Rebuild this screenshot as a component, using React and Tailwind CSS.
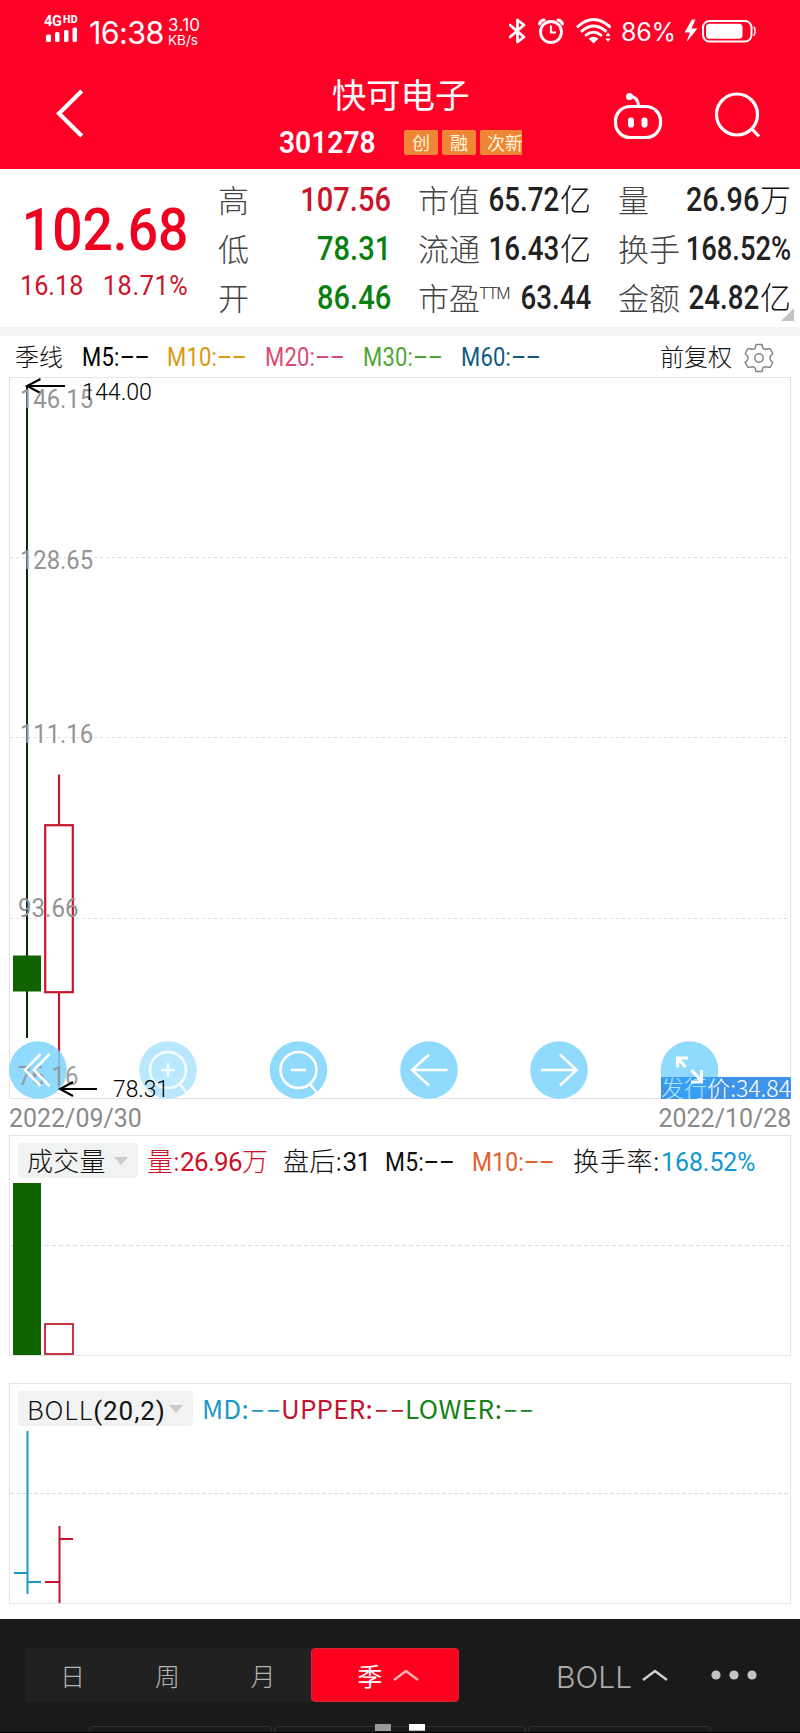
import React from "react";

const CJK = "font-['Noto_Sans_CJK_SC',sans-serif]";
const NUM = "font-['Roboto',sans-serif]";

function StatusBar() {
  return (
    <div className="flex h-[62px] items-start pl-[44px] text-white">
      <div className="mt-[15px] w-[45px]">
        <div className="flex h-[12px] items-start font-['Roboto',sans-serif] font-bold leading-[13px]">
          <span className="w-[19px] text-[14.500px] tracking-[-0.3px]">4G</span>
          <span className="text-[10.500px] font-extrabold leading-[10px] tracking-[0.4px]">HD</span>
        </div>
        <svg className="block" width="36" height="15" viewBox="0 0 36 15" fill="#fff">
          <rect x="2" y="7.500" width="5" height="7.500" rx="1.5" />
          <rect x="11" y="5" width="4.500" height="10" rx="1.5" />
          <rect x="20" y="3" width="4.500" height="12" rx="1.5" />
          <rect x="28.500" y="0.500" width="4.500" height="14.500" rx="1.5" />
        </svg>
      </div>
      <div className="mt-[15px] w-[79px] whitespace-nowrap font-['Inter',sans-serif] text-[30.500px] leading-[36px] tracking-[-0.6px]">16:38</div>
      <div className="w-[341px] pt-[18px] font-['Inter',sans-serif]">
        <div className="text-[17px] leading-[14px] tracking-[0.3px]">3.10</div>
        <div className="text-[13.500px] leading-[16px]">KB/s</div>
      </div>
      <svg className="mt-[17px] block" width="104" height="28" viewBox="0 0 104 28" fill="none" stroke="#fff">
        <path d="M1 8 L15 20 L8.500 25 V3 L15 8 L1 20" strokeWidth="2.800" strokeLinejoin="round" strokeLinecap="round" />
        <circle cx="42" cy="15" r="10.500" strokeWidth="2.800" />
        <path d="M42 8.500 V15.500 H47" strokeWidth="2.200" />
        <path d="M30.500 7 Q31.500 3.500 35 3 M53.500 7 Q52.500 3.500 49 3" strokeWidth="3" strokeLinecap="round" />
        <path d="M69 9.500 Q84.500 -4.500 100.500 9.500" strokeWidth="3" strokeLinecap="round" />
        <path d="M73 14 Q84.500 4 96.500 14" strokeWidth="3" strokeLinecap="round" />
        <path d="M77 18.200 Q84.500 12 92 18.200" strokeWidth="2.800" strokeLinecap="round" />
        <path d="M79.500 21.500 Q84.500 18 89.500 21.500 L84.500 26.500 Z" fill="#fff" stroke="none" />
        <path d="M96.500 19 L99 15.500 L101.500 19 Z M96.500 21.500 L99 25 L101.500 21.500 Z" fill="#fff" stroke="none" />
      </svg>
      <div className="ml-[8px] mt-[16px] w-[62px] whitespace-nowrap font-['Inter',sans-serif] text-[25px] leading-[32px] tracking-[-0.2px]">86%</div>
      <svg className="mt-[18px] block" width="75" height="26" viewBox="683 18 75 26" fill="none">
        <path d="M692 19.500 L684.500 32.500 H690 L686.500 42 L697.500 28.500 H691.500 L695.500 19.500 Z" fill="#fff" />
        <rect x="703" y="21" width="48.500" height="20.500" rx="6.500" stroke="#fff" strokeWidth="2" />
        <rect x="706" y="23.800" width="36.500" height="15" rx="3.500" fill="#fff" />
        <path d="M753.500 27 Q755 27.500 755 31 Q755 35 753.500 35.500" stroke="#fff" strokeWidth="1.500" />
      </svg>
    </div>
  );
}

function Tag({ children, className }) {
  return <div className={`h-[25px] overflow-hidden whitespace-nowrap bg-[#ef8636] text-center text-[18px] leading-[24px] text-[#fff6dc] ${className}`}>{children}</div>;
}

function TitleBar() {
  return (
    <div className="flex h-[107px] pl-[56px] text-white">
      <svg className="mt-[24px] block w-[223px]" width="223" height="56" viewBox="56 86 223 56" fill="none" stroke="#fff">
        <path d="M81.800 91 L59 113.500 L81.800 136" strokeWidth="4.200" />
      </svg>
      <div className="w-[243px]">
        <div className={`mt-[6px] text-center text-[34.500px] leading-[50px] tracking-[-0.1px] ${CJK}`}>快可电子</div>
        <div className="mt-[12px] flex">
          <div className={`mt-[-3px] w-[126px] origin-left scale-x-[0.910] whitespace-nowrap text-[31px] font-semibold leading-[32px] ${NUM}`}>301278</div>
          <div className={`flex gap-[4px] ${CJK}`}>
            <Tag className="w-[34px] rounded-[2px]">创</Tag>
            <Tag className="w-[34px] rounded-[2px]">融</Tag>
            <Tag className="w-[42px] rounded-l-[2px] pl-[7px] text-left">次新</Tag>
          </div>
        </div>
      </div>
      <svg className="mt-[26px] block" width="250" height="60" viewBox="522 88 250 60" fill="none" stroke="#fff" strokeWidth="3.200">
        <rect x="615.500" y="106.500" width="45" height="31" rx="14.500" />
        <path d="M638.500 106 Q638 97 630 96" />
        <circle cx="629.500" cy="96.500" r="2.500" fill="#fff" strokeWidth="2" />
        <rect x="628" y="117.500" width="6" height="10" rx="2.800" fill="#fff" stroke="none" />
        <rect x="641.500" y="117.500" width="6" height="10" rx="2.800" fill="#fff" stroke="none" />
        <circle cx="737" cy="114.500" r="20.500" />
        <path d="M751.500 128.500 L759 136.500" />
      </svg>
    </div>
  );
}

function Stat({ label, sup, value, unit, color = "text-[#222]", scale = "scale-x-[0.840]" }) {
  return (
    <div className="flex h-[49px] items-center justify-between whitespace-nowrap">
      <div className={`relative text-[31px] font-light leading-[48px] text-[#444] ${CJK}`}>
        {label}
        {sup && <span className="absolute left-[61px] top-[8px] font-['Inter',sans-serif] text-[16px] font-light leading-[24px] tracking-[-1.500px]">{sup}</span>}
      </div>
      <div className="-ml-[40px] flex items-center pt-[3px]">
        <span className={`inline-block origin-right text-[33px] font-medium leading-[48px] ${scale} ${color} ${NUM}`}>{value}</span>
        {unit && <span className={`-mt-[5px] ml-px text-[31px] font-light leading-[48px] text-[#111] ${CJK}`}>{unit}</span>}
      </div>
    </div>
  );
}

function Quote() {
  return (
    <div className="relative flex h-[158px]">
      <div className={`w-[218px] pl-[20px] text-[#f00020] ${NUM}`}>
        <div className="mt-[25px] origin-left scale-x-[0.890] whitespace-nowrap pl-[2px] text-[60px] font-medium leading-[72px]">102.68</div>
        <div className="mt-[2px] flex origin-left scale-x-[0.900] whitespace-nowrap text-[28px] leading-[36px] text-[#d01228]">
          <span className="w-[92px]">16.18</span>
          <span className="tracking-[0.700px]">18.71%</span>
        </div>
      </div>
      <div className="w-[173px] pt-[5px]">
        <Stat label="高" value="107.56" color="text-[#c8152a]" scale="scale-x-[0.880]" />
        <Stat label="低" value="78.31" color="text-[#0a8010]" scale="scale-x-[0.880]" />
        <Stat label="开" value="86.46" color="text-[#0a8010]" scale="scale-x-[0.880]" />
      </div>
      <div className="ml-[27px] w-[173px] pt-[5px]">
        <Stat label="市值" value="65.72" unit="亿" />
        <Stat label="流通" value="16.43" unit="亿" />
        <Stat label="市盈" sup="TTM" value="63.44" />
      </div>
      <div className="ml-[27px] w-[173px] pt-[5px]">
        <Stat label="量" value="26.96" unit="万" scale="scale-x-[0.870]" />
        <Stat label="换手" value="168.52%" scale="scale-x-[0.830]" />
        <Stat label="金额" value="24.82" unit="亿" />
      </div>
      <svg className="absolute bottom-[6px] right-[6px]" width="13" height="13" viewBox="0 0 13 13"><path d="M13 0 V13 H0 Z" fill="#c4c4c4" /></svg>
    </div>
  );
}

function Gear() {
  return (
    <svg className="mt-[7px] block" width="30" height="30" viewBox="0 0 30 30" fill="none" stroke="#858585" strokeWidth="1.500">
      <path d="M12 1.500 H18 L18.800 5 Q20.500 7 23 6 L26 5.500 L28.800 10.500 L26.500 13 Q25.500 15 26.500 17 L28.800 19.500 L26 24.500 L23 24 Q20.500 23 18.800 25 L18 28.500 H12 L11.200 25 Q9.500 23 7 24 L4 24.500 L1.200 19.500 L3.500 17 Q4.500 15 3.500 13 L1.200 10.500 L4 5.500 L7 6 Q9.500 7 11.200 5 Z" strokeLinejoin="round" />
      <circle cx="15" cy="15" r="4.200" />
    </svg>
  );
}

function Average({ name, className }) {
  return (
    <span className={className}>
      <span className="inline-block origin-left scale-x-[0.880] tracking-[0.200px]">
        {name}:<span className="relative -top-px left-[1px] inline-block origin-left scale-x-[2.150] tracking-[0.900px]">--</span>
      </span>
    </span>
  );
}

function MaRow() {
  return (
    <div className={`flex h-[41px] whitespace-nowrap pl-[15px] text-[25px] leading-[43px] ${NUM}`}>
      <span className={`w-[67px] text-[24px] font-light leading-[40px] text-[#111] ${CJK}`}>季线</span>
      <Average name="M5" className="w-[85px] text-black" />
      <Average name="M10" className="w-[98px] text-[#d79a10]" />
      <Average name="M20" className="w-[98px] text-[#d94a70]" />
      <Average name="M30" className="w-[98px] text-[#4fa533]" />
      <Average name="M60" className="w-[199px] text-[#0f5a82]" />
      <span className={`w-[84px] text-[24px] font-light leading-[40px] text-[#111] ${CJK}`}>前复权</span>
      <Gear />
    </div>
  );
}

function Label({ x, y, w, size = 25, fill = "#949494", weight = 400, opacity = 1, children }) {
  return <text x={x} y={y} textLength={w} lengthAdjust="spacingAndGlyphs" fontSize={size} fill={fill} fontWeight={weight} opacity={opacity} className={NUM}>{children}</text>;
}

function Disc({ cx, opacity = 0.85 }) {
  return <circle cx={cx} cy="1070" r="28.800" fill="#7dd4fd" fillOpacity={opacity} />;
}

function Glyph({ cx, opacity = 1, children }) {
  return <g transform={`translate(${cx} 1070)`} fill="none" stroke="#fff" strokeWidth="2.600" opacity={opacity}>{children}</g>;
}

function KLine() {
  return (
    <svg className="block" width="800" height="723" viewBox="0 377 800 723">
      <rect x="9.500" y="377.500" width="781" height="721" fill="#fff" stroke="#e4e4e4" />
      <g stroke="#dcdcdc" strokeDasharray="3 3">
        <path d="M10 557.500 H790" />
        <path d="M10 737.500 H790" />
        <path d="M10 918.500 H790" />
      </g>
      <path d="M27 386 V1038" stroke="#0a2a08" strokeWidth="2" />
      <rect x="13" y="955.500" width="28" height="36" fill="#106400" />
      <path d="M59 774.500 V825 M59 993 V1088" stroke="#c8152a" strokeWidth="2.200" />
      <rect x="45.200" y="825.200" width="27.600" height="167" fill="#fff" stroke="#c8152a" strokeWidth="2.200" />
      <path d="M65 386 H27 M40.500 379 L27 386 L40.500 393" fill="none" stroke="#000" strokeWidth="2" />
      <Label x="20" y="408" w="73">146.15</Label>
      <Label x="20" y="569" w="73">128.65</Label>
      <Label x="20" y="743" w="73">111.16</Label>
      <Label x="18" y="917" w="60.500">93.66</Label>
      <Label x="82" y="400" w="70" size={23} fill="#000" weight={300}>144.00</Label>

      <Disc cx="38" />
      <Label x="18" y="1085" w="60.500" opacity="0.9">76.16</Label>
      <Glyph cx="38"><path d="M2.500 -16 L-13 0 L2.500 16 M11.500 -16 L-4 0 L11.500 16" /></Glyph>
      <Disc cx="168" opacity="0.550" />
      <Glyph cx="168" opacity="0.850"><circle cx="0" cy="0" r="18" /><path d="M-7 0 H7 M0 -7 V7 M11.500 14 L18 22" /></Glyph>
      <Disc cx="298.500" />
      <Glyph cx="298.500"><circle cx="0" cy="0" r="18" /><path d="M-7.500 0 H7.500 M11.500 14 L18 22" /></Glyph>
      <Disc cx="429" />
      <Glyph cx="429"><path d="M18.500 0 H-17 M0 -15.500 L-17 0 L0 15.500" /></Glyph>
      <Disc cx="559" />
      <Glyph cx="559"><path d="M-18 0 H17.500 M1 -15.500 L17.500 0 L1 15.500" /></Glyph>
      <Disc cx="689.500" />
      <rect x="661" y="1077" width="130" height="22" fill="#3f93e8" />
      <path d="M661.600 1077 H717.400 A28.800 28.800 0 0 1 689.500 1098.800 A28.800 28.800 0 0 1 661.600 1077 Z" fill="#38a0f2" />
      <text x="661" y="1096.500" textLength="130" lengthAdjust="spacingAndGlyphs" fontSize="22.500" fontWeight="300" fill="#fff" className={CJK}><tspan fill="#aee6ff">发行</tspan>价:34.84</text>
      <Glyph cx="689.500"><path d="M-1.500 -12 H-12 V-2.500 M-12 -12 L-4 -3 M2 0 L12 11 M12 0 V12 H1.500" strokeWidth="3.200" /></Glyph>

      <path d="M97 1089 H60 M73 1082 L60 1089 L73 1096" fill="none" stroke="#000" strokeWidth="2" />
      <Label x="113" y="1097" w="56" size={23} fill="#000" weight={300}>78.31</Label>
    </svg>
  );
}

function Dates() {
  return (
    <div className={`flex h-[35px] justify-between pl-[9px] pr-[9px] text-[26px] leading-[37px] text-[#8a8a8a] ${NUM}`}>
      <span className="origin-left scale-x-[0.960]">2022/09/30</span>
      <span className="origin-right scale-x-[0.960]">2022/10/28</span>
    </div>
  );
}

function Pill({ children, className }) {
  return (
    <div className={`flex h-[35px] items-center justify-between rounded-[4px] bg-[#f1f2f2] pl-[9px] pr-[10px] ${className}`}>
      {children}
      <svg width="14" height="8" viewBox="0 0 14 8"><path d="M0 0 H14 L7 8 Z" fill="#cbcbcb" /></svg>
    </div>
  );
}

function Han({ children }) {
  return <span className={`text-[26px] font-light leading-none tracking-[0.3px] ${CJK}`}>{children}</span>;
}

function VolumePanel() {
  return (
    <div className="mx-[9px] h-[221px] w-[782px] border border-[#e4e4e4]">
      <div className={`flex h-[46px] items-start whitespace-nowrap pl-[8px] pt-[7px] text-[26px] leading-[38px] text-[#111] ${NUM}`}>
        <Pill className="w-[120px]"><span className={`-mt-[2px] font-light tracking-[0.3px] ${CJK}`}>成交量</span></Pill>
        <span className="ml-[9px] w-[136px] tracking-[-0.700px] text-[#cc1228]"><Han>量:</Han>26.96<Han>万</Han></span>
        <span className="w-[102px] tracking-[-0.500px]"><Han>盘后:</Han>31</span>
        <Average name="M5" className="w-[87px]" />
        <Average name="M10" className="w-[101px] text-[#e0602c]" />
        <span className="w-[88px] tracking-[0.700px]"><span className={`font-light leading-none ${CJK}`}>换手率:</span></span>
        <span className="origin-left scale-x-[0.955] text-[#0f97cf]">168.52%</span>
      </div>
      <svg className="block" width="780" height="173" viewBox="10 1182 780 173">
        <path d="M10 1245.500 H790" stroke="#dcdcdc" strokeDasharray="4 3" />
        <rect x="13" y="1183" width="28" height="173" fill="#106400" />
        <rect x="45" y="1324" width="28" height="30" fill="#fff" stroke="#c42034" strokeWidth="1.800" />
      </svg>
    </div>
  );
}

function Dashes() {
  return <span className="relative -top-px left-[1px] inline-block origin-left scale-x-[1.650] tracking-[0.600px]">--</span>;
}

function BollPanel() {
  return (
    <div className="mx-[9px] mt-[27px] h-[221px] w-[782px] border border-[#e4e4e4]">
      <div className={`flex h-[46px] items-start whitespace-nowrap pl-[8px] pt-[7px] text-[26px] leading-[34px] ${CJK}`}>
        <Pill className="w-[175px]"><span className="tracking-[0.900px] text-[#111]"><span className="font-light">BOLL</span><span className={`leading-none ${NUM}`}>(20,2)</span></span></Pill>
        <span className="ml-[9px] w-[79px] tracking-[0.200px] text-[#1b98c8]">MD:<Dashes /></span>
        <span className="w-[124px] tracking-[0.200px] text-[#c4142a]">UPPER:<Dashes /></span>
        <span className="tracking-[0.500px] text-[#178018]">LOWER:<Dashes /></span>
      </div>
      <svg className="block" width="780" height="173" viewBox="10 1430 780 173" fill="none" strokeWidth="2">
        <path d="M10 1493.500 H790" stroke="#dcdcdc" strokeDasharray="4 2" strokeWidth="1" />
        <path d="M27.500 1431 V1594 M14 1573 H27.500 M27.500 1582 H41" stroke="#1b98d0" />
        <path d="M59.500 1526 V1603 M45 1582 H59.500 M59.500 1539 H73" stroke="#c4142a" />
      </svg>
    </div>
  );
}

function Chevron({ color }) {
  return <svg width="26" height="12" viewBox="0 0 26 12" fill="none"><path d="M1 11 L13 2 L25 11" stroke={color} strokeWidth="2.400" strokeLinejoin="round" /></svg>;
}

function BottomBar() {
  return (
    <div className="relative mt-[15px] h-[114px] overflow-hidden bg-[#1a1a1a] pt-[29px]">
      <div className={`flex h-[54px] items-center pl-[25px] text-[25px] text-[#b5b5b5] ${CJK}`}>
        <div className="flex h-[54px] w-[434px] items-center rounded-[4px] bg-[#212121] font-light">
          <span className="w-[95px] pt-[2px] text-center">日</span>
          <span className="w-[95px] pt-[2px] text-center">周</span>
          <span className="w-[96px] pt-[2px] text-center">月</span>
          <div className="flex h-[54px] w-[148px] items-center justify-center gap-[10px] rounded-[4px] border border-[#d82038] bg-[#ff001f] pl-[6px] font-normal text-white">
            <span className="pt-[2px]">季</span><Chevron color="#ffb0b0" />
          </div>
        </div>
        <span className="ml-[97px] mr-[10px] pt-[4px] font-['Inter',sans-serif] text-[30px] font-light text-[#aaa]">BOLL</span>
        <Chevron color="#d0d0d0" />
        <svg className="ml-[43px]" width="46" height="10" viewBox="0 0 46 10" fill="#c4c4c4"><circle cx="5" cy="5" r="4.600" /><circle cx="23" cy="5" r="4.600" /><circle cx="41" cy="5" r="4.600" /></svg>
      </div>
      <div className="mt-[24px] flex h-[10px] gap-[2px] pl-[89px]">
        <div className="h-[10px] w-[183px] rounded-t-[4px] border border-[#333]" />
        <div className="h-[10px] w-[252px] rounded-t-[4px] border border-[#333]" />
        <div className="h-[10px] w-[183px] rounded-t-[4px] border border-[#333]" />
      </div>
      <div className="absolute left-[375px] top-[105px] flex gap-[18px]">
        <div className="h-[7px] w-[16px] bg-[#999]" />
        <div className="h-[7px] w-[16px] border-b border-[#bbb] bg-white" />
      </div>
      <div className="absolute bottom-0 left-0 h-px w-full bg-black" />
    </div>
  );
}

export default function App() {
  return (
    <div className="h-[1733px] w-[800px] overflow-hidden bg-white">
      <div className="h-[169px] bg-[#ff0026]">
        <StatusBar />
        <TitleBar />
      </div>
      <Quote />
      <div className="h-[9px] bg-[#f5f5f5]" />
      <MaRow />
      <KLine />
      <Dates />
      <VolumePanel />
      <BollPanel />
      <BottomBar />
    </div>
  );
}
